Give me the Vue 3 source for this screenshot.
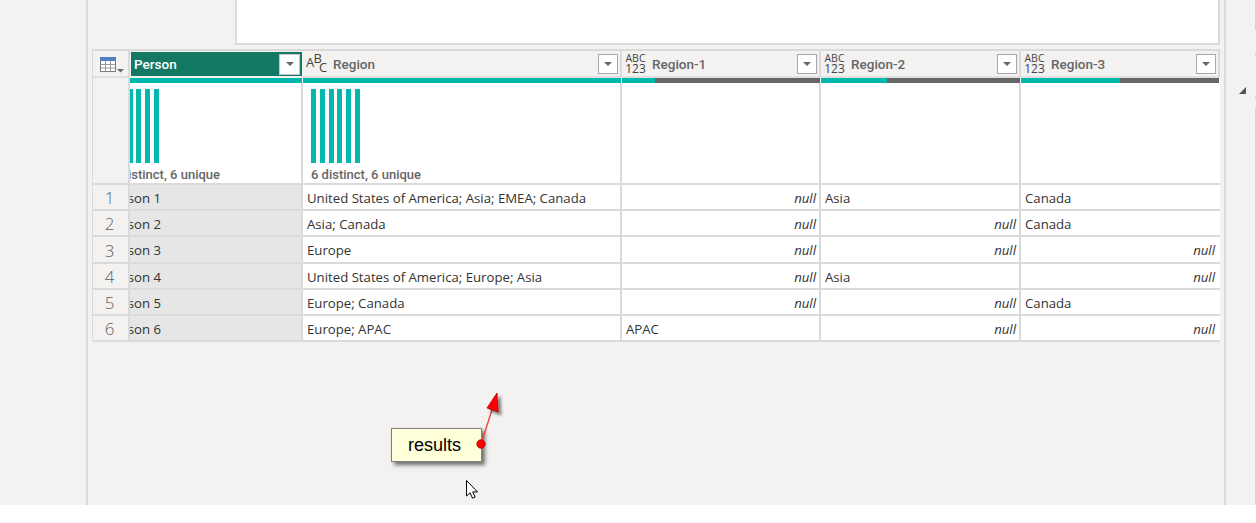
<script setup>
const cols = [
  { name: 'Region', type: 'abc', fill: 100 },
  { name: 'Region-1', type: 'any', fill: 16.7 },
  { name: 'Region-2', type: 'any', fill: 33.3 },
  { name: 'Region-3', type: 'any', fill: 50 }
]
const rows = [
  ['Person 1', 'United States of America; Asia; EMEA; Canada', null, 'Asia', 'Canada'],
  ['Person 2', 'Asia; Canada', null, null, 'Canada'],
  ['Person 3', 'Europe', null, null, null],
  ['Person 4', 'United States of America; Europe; Asia', null, 'Asia', null],
  ['Person 5', 'Europe; Canada', null, null, 'Canada'],
  ['Person 6', 'Europe; APAC', 'APAC', null, null]
]
const bars = [1, 2, 3, 4, 5, 6]
</script>

<template>
  <div class="page">
    <div class="gutter-left"></div>
    <main class="main">
      <div class="formula"></div>
      <div class="grid">
        <!-- header row -->
        <div class="corner">
          <svg width="26" height="18" viewBox="0 0 26 18">
            <rect x="0.5" y="0.5" width="15" height="14" fill="#fff" stroke="#7a7a7a" />
            <rect x="0" y="0" width="16" height="4" fill="#4f7fc0" />
            <path d="M5.5 4v10M10.5 4v10M1 7.5h14M1 11h14" stroke="#9a9a9a" fill="none" />
            <path d="M17 12h7l-3.5 3.5z" fill="#666" />
          </svg>
        </div>
        <div class="head head-active">
          <span class="head-name">Person</span>
          <span class="filter filter-active"><i class="caret"></i></span>
        </div>
        <div v-for="c in cols" :key="c.name" class="head">
          <svg v-if="c.type === 'abc'" class="type" width="24" height="24" viewBox="0 0 24 24">
            <text x="0" y="15" class="t-abc">A</text>
            <text x="7.5" y="11" class="t-abc">B</text>
            <text x="13" y="20" class="t-abc">C</text>
          </svg>
          <span v-else class="type type-any"><span>ABC</span><span>123</span></span>
          <span class="head-name">{{ c.name }}</span>
          <span class="filter"><i class="caret"></i></span>
        </div>

        <!-- quality bar row -->
        <div class="bar-blank"></div>
        <div class="bar"><i class="bar-fill" style="width: 100%"></i></div>
        <div v-for="c in cols" :key="'b' + c.name" class="bar">
          <i class="bar-fill" :style="{ width: c.fill + '%' }"></i>
        </div>

        <!-- distribution row -->
        <div class="dist-blank"></div>
        <div class="dist">
          <div class="dist-inner dist-scrolled">
            <div class="hist"><i v-for="b in bars" :key="b"></i></div>
            <div class="dist-label">6 distinct, 6 unique</div>
          </div>
        </div>
        <div class="dist">
          <div class="dist-inner">
            <div class="hist"><i v-for="b in bars" :key="b"></i></div>
            <div class="dist-label">6 distinct, 6 unique</div>
          </div>
        </div>
        <div class="dist"></div>
        <div class="dist"></div>
        <div class="dist last"></div>

        <!-- data rows -->
        <template v-for="(r, i) in rows" :key="i">
          <div class="num">{{ i + 1 }}</div>
          <div class="cell cell-key"><span class="scrolled">{{ r[0] }}</span></div>
          <div
            v-for="(v, j) in r.slice(1)"
            :key="j"
            class="cell"
            :class="{ 'is-null': v === null, last: j === 3 }"
          >
            {{ v === null ? 'null' : v }}
          </div>
        </template>
      </div>

      <div class="callout">
        <span>results</span>
      </div>
    </main>
    <div class="gutter-right">
      <svg width="30" height="505" viewBox="0 0 30 505">
        <path d="M29.5 0v30M29.5 108v397" stroke="#d4d4d4" fill="none" />
        <path d="M13 94h7v-7z" fill="#555" />
        <path d="M29 54.5h1M29 97.5h1" stroke="#e0a868" fill="none" />
      </svg>
    </div>

    <svg class="overlay" width="1256" height="505" viewBox="0 0 1256 505">
      <defs>
        <filter id="sh" x="-50%" y="-50%" width="200%" height="200%">
          <feDropShadow dx="3" dy="3" stdDeviation="1.6" flood-color="#000" flood-opacity="0.5" />
        </filter>
      </defs>
      <path d="M481 444L492 410" stroke="#f03a3a" stroke-width="1.3" fill="none" />
      <path d="M497 393L487 408L498 412z" fill="#ff0000" stroke="#b00000" stroke-width="0.8" filter="url(#sh)" />
      <circle cx="481" cy="444" r="4.2" fill="#ff0000" stroke="#b00000" stroke-width="0.8" />
      <path d="M466.5 480.5v15.5l3.6-3.2 2.4 5.4 2.6-1.1-2.4-5.2h4.8z" fill="#fff" stroke="#000" stroke-width="1" stroke-linejoin="miter" />
    </svg>
  </div>
</template>

<style>
html, body { background: #fff; }
</style>

<style scoped>
.page {
  position: relative;
  display: flex;
  width: 1256px;
  height: 505px;
  background: #f3f2f1;
  overflow: hidden;
  font-family: "Open Sans", "Liberation Sans", sans-serif;
}
.gutter-left { width: 86px; flex: none; }
.main {
  position: relative;
  width: 1140px;
  flex: none;
  box-sizing: border-box;
  border-left: 2px solid #dadada;
  border-right: 2px solid #dadada;
  padding-left: 4px;
}
.gutter-right { flex: none; width: 30px; }
.gutter-right svg { display: block; }
.formula {
  box-sizing: border-box;
  margin-left: 143px;
  width: 985px;
  height: 45px;
  background: #fff;
  border: 2px solid #dadada;
  border-top: 0;
}
.grid {
  display: grid;
  margin-top: 4px;
  width: 1128px;
  grid-template-columns: 37px 173px 319px 199px 200px 199px;
  grid-template-rows: 27px 5px 102px 26px 26px 27px 26px 26px 26px;
  border-left: 1px solid #dadada;
  border-top: 2px solid #dadada;
  box-sizing: border-box;
}
.corner {
  display: flex;
  align-items: center;
  padding: 5px 0 0 7px;
  box-sizing: border-box;
  border-right: 2px solid #dadada;
  border-bottom: 2px solid #e0e0e0;
}
.corner svg { display: block; }
.head {
  display: flex;
  align-items: center;
  box-sizing: border-box;
  padding: 0 2px 0 3px;
  border-right: 2px solid #dadada;
  border-bottom: 2px solid #e0e0e0;
  color: #666;
}
.head-active {
  background: #137864;
  color: #fff;
  padding-left: 3px;
  padding-right: 2px;
  border: 1px solid #f3f2f1;
  border-bottom: 2px solid #f3f2f1;
}
.head-name {
  flex: 1;
  font-family: Roboto, "Liberation Sans", sans-serif;
  font-weight: 500;
  font-size: 13.5px;
  white-space: nowrap;
}
.type { flex: none; margin-right: 3px; display: block; }
.type-any {
  display: flex;
  flex-direction: column;
  width: 21px;
  margin-right: 6px;
  font-size: 10.5px;
  line-height: 10.5px;
  color: #444;
  text-align: center;
}
.type-any span:last-child { font-size: 12px; }
.t-abc {
  font-family: "Open Sans", sans-serif;
  font-size: 13px;
  fill: #444;
}
.filter {
  flex: none;
  display: flex;
  align-items: center;
  justify-content: center;
  box-sizing: border-box;
  width: 20px;
  height: 20px;
  background: #fff;
  border: 1px solid #a8a8a8;
}
.filter-active { border-color: #c8c8c8; width: 21px; height: 21px; }
.caret {
  width: 0;
  height: 0;
  border-left: 4.5px solid transparent;
  border-right: 4.5px solid transparent;
  border-top: 4.5px solid #666;
}
.bar-blank {
  border-right: 2px solid #dadada;
}
.bar {
  background: #666;
  border-right: 1px solid #fff;
  display: flex;
}
.bar-fill { display: block; background: #01b8aa; }
.dist-blank {
  border-right: 2px solid #dadada;
  border-bottom: 2px solid #dadada;
}
.dist {
  background: #fff;
  border-right: 2px solid #dadada;
  border-bottom: 2px solid #dadada;
  box-sizing: border-box;
  overflow: hidden;
}
.dist-inner { padding: 6px 0 0 8px; }
.dist-scrolled { margin-left: -28px; }
.hist { display: flex; gap: 3.8px; height: 74px; }
.hist i { width: 5px; background: #01b8aa; display: block; flex: none; }
.dist-label {
  margin-top: 4px;
  font-family: Roboto, "Liberation Sans", sans-serif;
  font-weight: 500;
  font-size: 13px;
  line-height: 16px;
  color: #666;
  white-space: nowrap;
}
.num {
  display: flex;
  align-items: center;
  justify-content: center;
  padding: 1px 2px 0 0;
  font-size: 17px;
  font-weight: 300;
  color: #605e5c;
  border-right: 2px solid #dadada;
  border-bottom: 2px solid #dadada;
  box-sizing: border-box;
}
.cell {
  display: flex;
  align-items: center;
  box-sizing: border-box;
  padding: 1px 3px 0 4px;
  background: #fff;
  font-size: 13.2px;
  color: #333;
  white-space: nowrap;
  overflow: hidden;
  border-right: 2px solid #dadada;
  border-bottom: 2px solid #dadada;
}
.cell.last { border-right: 0; padding-right: 5px; }
.dist.last { border-right: 0; }
.cell-key { background: #e6e6e6; padding: 1px 0 0; }
.scrolled { margin-left: -23px; }
.is-null { justify-content: flex-end; font-style: italic; }
.callout {
  position: absolute;
  left: 303px;
  top: 428px;
  box-sizing: border-box;
  width: 91px;
  height: 34px;
  padding-left: 16px;
  display: flex;
  align-items: center;
  background: #ffffd9;
  border: 1px solid #808080;
  box-shadow: 3px 3px 4px rgba(0, 0, 0, 0.55);
  font-family: "Liberation Sans", sans-serif;
  font-size: 18px;
  color: #000;
}
.overlay { position: absolute; left: 0; top: 0; pointer-events: none; }
</style>
